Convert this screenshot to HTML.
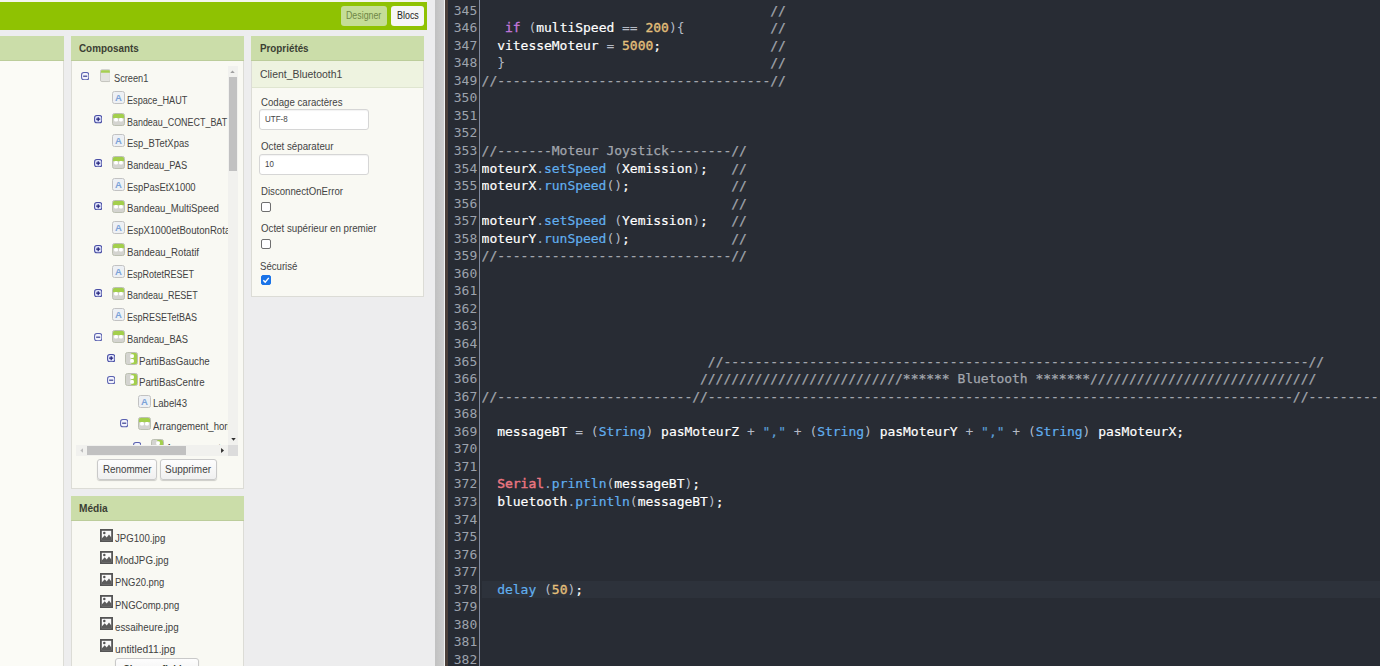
<!DOCTYPE html>
<html lang="fr">
<head>
<meta charset="utf-8">
<title>App Inventor / Arduino</title>
<style>
*{box-sizing:border-box;margin:0;padding:0}
html,body{width:1380px;height:666px;overflow:hidden;background:#ededee;font-family:"Liberation Sans",sans-serif;color:#333}
#left{position:absolute;left:0;top:0;width:445px;height:666px;background:#ededee;overflow:hidden}
#topstrip{position:absolute;left:0;top:0;width:436px;height:2px;background:#f4f5ee}
#bar{position:absolute;left:0;top:2px;width:427.3px;height:27.6px;background:#8fc202}
.tbtn{position:absolute;top:6px;height:20px;border-radius:3px;font-size:10px;line-height:20px;white-space:nowrap}
.tbtn b{position:absolute;top:-0.200px;font-weight:normal;transform-origin:0 50%}
#bdes{left:341px;width:46px;background:#c5dd96;color:#6f8746}
#bblo{left:391px;width:33px;background:#f6f6f6;color:#222}
#margin{position:absolute;left:427.3px;top:0;width:8px;height:34px;background:#ededee}
#vscroll{position:absolute;left:435px;top:0;width:9px;height:666px;background:linear-gradient(to right,#c1c1c1,#cecece)}
#vwhite{position:absolute;left:444px;top:0;width:1px;height:666px;background:#f2f2f2}
.panel{position:absolute;background:#f9f9f3;border:1px solid #dcdcd6}
.ph{position:absolute;left:-1px;right:-1px;top:-1px;height:25px;background:#cbdda9;border-bottom:1px solid #bccd9b}
#viewer{left:-1px;top:36px;width:64.500px;height:640px;background:#fbfbf6}
#comp{left:70.500px;top:36px;width:173px;height:453px}
#prop{left:251px;top:36px;width:173px;height:260.500px}
#media{left:70.500px;top:495.500px;width:173px;height:190px}
#psub{position:absolute;left:0;right:0;top:24px;height:27px;background:#eef3e0;border-bottom:1px solid #dfe5d0}
/* overlay : everything below is in page coordinates */
#ov{position:absolute;left:0;top:0;width:445px;height:666px;overflow:hidden}
.t{position:absolute;white-space:nowrap;transform-origin:0 50%;line-height:14px;height:14px}
.hd{font-weight:bold;font-size:10px;color:#3b4033}
.lb{font-size:10px;color:#424242}
.pl{font-size:10.3px;color:#444}
.ic,.tg{position:absolute;display:block}
#treeclip{position:absolute;left:71.500px;top:61.500px;width:156px;height:383.500px;overflow:hidden}
#treeclip>div{position:absolute;left:-71.500px;top:-61.500px;width:445px;height:666px}
/* scrollbars */
#cvs{position:absolute;left:227.500px;top:66px;width:10.500px;height:379px;background:#f1f1ee}
#cvs .th{position:absolute;left:1.500px;top:10.500px;width:7.500px;height:94px;background:#c1c1c1}
#chs{position:absolute;left:75.500px;top:445px;width:152px;height:10.500px;background:#f1f1ee}
#chs .th{position:absolute;left:11.500px;top:1px;width:99px;height:8.500px;background:#c1c1c1}
#corner{position:absolute;left:227.500px;top:445px;width:10.500px;height:10.500px;background:#dcdcdc}
.arr{position:absolute;display:block}
.btn{position:absolute;height:21px;border:1px solid #c9c9c9;border-radius:3px;background:linear-gradient(#fdfdfd,#f0f0f0);box-shadow:0 1px 1px rgba(0,0,0,.18)}
.inp{position:absolute;left:258.500px;width:110.500px;height:20.500px;border:1px solid #d6d6d6;border-radius:3px;background:#fff;box-shadow:inset 0 1px 1px rgba(0,0,0,.05)}
.cb{position:absolute;left:261px;width:10px;height:10px;border:1px solid #6f6f6f;border-radius:2px;background:#fff}
.cb.on{background:#1a73e8;border-color:#1a73e8}
/* editor */
#ed{position:absolute;left:445px;top:0;width:935px;height:666px;background:#282c34;overflow:hidden}
#edb{position:absolute;left:0;top:0;width:3px;height:666px;background:#4b3f39}
#gut{position:absolute;left:3px;top:0;width:31px;height:666px;background:#272b33}
#gsep{position:absolute;left:33.600px;top:0;width:1.700px;height:666px;background:#808a9f}
.ln{position:absolute;left:0;width:935px;height:17.55px;line-height:17.55px;font-family:"DejaVu Sans Mono","Liberation Mono",monospace;font-size:13px;letter-spacing:-0.026px;white-space:pre;color:#abb2bf}
.ln.hl .tx{background:#2d323b}
.num{position:absolute;left:8.800px;top:0;color:#9da3ad}
.tx{position:absolute;left:36.600px;top:0;width:900px;height:17.55px;overflow:hidden}
.w{color:#fff;-webkit-text-stroke:0.18px #fff}.c{color:#a2a6ad;-webkit-text-stroke:0.25px #a2a6ad}.k{color:#c678dd;-webkit-text-stroke:0.3px #c678dd}.n{color:#e5c07b;-webkit-text-stroke:0.3px #e5c07b}.f{color:#61afef;-webkit-text-stroke:0.2px #61afef}.p{color:#b4bac5}.d{color:#8fa8c8}.s{color:#5b9fd6;-webkit-text-stroke:0.2px #5b9fd6}.r{color:#ea7681;-webkit-text-stroke:0.45px #ea7681}
</style>
</head>
<body>
<div id="left">
  <div id="topstrip"></div>
  <div id="bar"></div>
  <div class="tbtn" id="bdes"><b style="left:5.200px;transform:scaleX(.882)">Designer</b></div>
  <div class="tbtn" id="bblo"><b style="left:5.500px;transform:scaleX(.892)">Blocs</b></div>
  <div id="margin"></div><div id="vscroll"></div><div id="vwhite"></div>

  <div class="panel" id="viewer"><div class="ph"></div></div>
  <div class="panel" id="comp"><div class="ph"></div></div>
  <div class="panel" id="prop"><div class="ph"></div><div id="psub"></div></div>
  <div class="panel" id="media"><div class="ph"></div></div>

  <div id="ov">
<span class="t hd" style="left:79.10px;top:41.90px;font-size:10px;transform:scaleX(0.986)">Composants</span>
<span class="t hd" style="left:259.60px;top:41.90px;font-size:10px;transform:scaleX(0.982)">Propriétés</span>
<span class="t hd" style="left:79.30px;top:501.80px;font-size:10px;transform:scaleX(1.013)">Média</span>
<span class="t pl" style="left:259.70px;top:67.40px;font-size:11.3px;transform:scaleX(0.923)">Client_Bluetooth1</span>
    <div id="treeclip"><div>
<svg class="tg" style="left:80.80px;top:71.80px" width="8.4" height="8.4" viewBox="0 0 9 9"><rect x="0.6" y="0.6" width="7.800" height="7.800" rx="2.500" fill="#f3f4fc" stroke="#5b62b0" stroke-width="1.100"/><path d="M2.300 4.500h4.400" stroke="#3d4291" stroke-width="1.300"/></svg><svg class="ic" style="left:99.70px;top:69.40px" width="10.800" height="13.400" viewBox="0 0 12 14"><rect x="0.500" y="0.500" width="11" height="13" rx="1.600" fill="#e4e4e0" stroke="#bfbfba"/><path d="M1 3.600V2.200a1.200 1.200 0 0 1 1.200-1.200h7.600a1.200 1.200 0 0 1 1.200 1.200v1.400z" fill="#a6cf52"/></svg><span class="t lb" style="left:113.50px;top:72.20px;font-size:10px;transform:scaleX(0.921)">Screen1</span>
<svg class="ic" style="left:112.00px;top:90.80px" width="13" height="13" viewBox="0 0 13 13"><rect x="0.500" y="0.500" width="12" height="12" rx="2" fill="#edf0f4" stroke="#c2c2c2"/><text x="6.500" y="9.800" text-anchor="middle" font-family="Liberation Sans, sans-serif" font-size="9.500" font-weight="bold" fill="#7aa2d8">A</text></svg><span class="t lb" style="left:127.40px;top:93.60px;font-size:10px;transform:scaleX(0.913)">Espace_HAUT</span>
<svg class="tg" style="left:94.00px;top:115.40px" width="8.4" height="8.4" viewBox="0 0 9 9"><rect x="0.6" y="0.6" width="7.800" height="7.800" rx="2.500" fill="#dfe3fa" stroke="#4a4fa5" stroke-width="1.100"/><path d="M2.300 4.500h4.400M4.500 2.300v4.400" stroke="#23237a" stroke-width="1.300"/></svg><svg class="ic" style="left:112.00px;top:113.00px" width="13" height="13" viewBox="0 0 13 13"><rect x="0.500" y="0.500" width="12" height="12" rx="2" fill="#d4d4d0" stroke="#bcc0b2"/><path d="M1 5.200V2.500A1.500 1.500 0 0 1 2.500 1h8A1.500 1.500 0 0 1 12 2.500V5.200z" fill="#a3cf4c"/><rect x="2.200" y="4.900" width="3.700" height="3.700" rx="1.300" fill="#fff"/><rect x="7.100" y="4.900" width="3.700" height="3.700" rx="1.300" fill="#fff"/></svg><span class="t lb" style="left:126.70px;top:115.80px;font-size:10px;transform:scaleX(0.893)">Bandeau_CONECT_BAT</span>
<svg class="ic" style="left:112.00px;top:134.40px" width="13" height="13" viewBox="0 0 13 13"><rect x="0.500" y="0.500" width="12" height="12" rx="2" fill="#edf0f4" stroke="#c2c2c2"/><text x="6.500" y="9.800" text-anchor="middle" font-family="Liberation Sans, sans-serif" font-size="9.500" font-weight="bold" fill="#7aa2d8">A</text></svg><span class="t lb" style="left:127.40px;top:137.20px;font-size:10px;transform:scaleX(0.943)">Esp_BTetXpas</span>
<svg class="tg" style="left:94.00px;top:158.50px" width="8.4" height="8.4" viewBox="0 0 9 9"><rect x="0.6" y="0.6" width="7.800" height="7.800" rx="2.500" fill="#dfe3fa" stroke="#4a4fa5" stroke-width="1.100"/><path d="M2.300 4.500h4.400M4.500 2.300v4.400" stroke="#23237a" stroke-width="1.300"/></svg><svg class="ic" style="left:112.00px;top:156.10px" width="13" height="13" viewBox="0 0 13 13"><rect x="0.500" y="0.500" width="12" height="12" rx="2" fill="#d4d4d0" stroke="#bcc0b2"/><path d="M1 5.200V2.500A1.500 1.500 0 0 1 2.500 1h8A1.500 1.500 0 0 1 12 2.500V5.200z" fill="#a3cf4c"/><rect x="2.200" y="4.900" width="3.700" height="3.700" rx="1.300" fill="#fff"/><rect x="7.100" y="4.900" width="3.700" height="3.700" rx="1.300" fill="#fff"/></svg><span class="t lb" style="left:126.70px;top:158.90px;font-size:10px;transform:scaleX(0.929)">Bandeau_PAS</span>
<svg class="ic" style="left:112.00px;top:177.80px" width="13" height="13" viewBox="0 0 13 13"><rect x="0.500" y="0.500" width="12" height="12" rx="2" fill="#edf0f4" stroke="#c2c2c2"/><text x="6.500" y="9.800" text-anchor="middle" font-family="Liberation Sans, sans-serif" font-size="9.500" font-weight="bold" fill="#7aa2d8">A</text></svg><span class="t lb" style="left:127.40px;top:180.60px;font-size:10px;transform:scaleX(0.942)">EspPasEtX1000</span>
<svg class="tg" style="left:94.00px;top:201.90px" width="8.4" height="8.4" viewBox="0 0 9 9"><rect x="0.6" y="0.6" width="7.800" height="7.800" rx="2.500" fill="#dfe3fa" stroke="#4a4fa5" stroke-width="1.100"/><path d="M2.300 4.500h4.400M4.500 2.300v4.400" stroke="#23237a" stroke-width="1.300"/></svg><svg class="ic" style="left:112.00px;top:199.50px" width="13" height="13" viewBox="0 0 13 13"><rect x="0.500" y="0.500" width="12" height="12" rx="2" fill="#d4d4d0" stroke="#bcc0b2"/><path d="M1 5.200V2.500A1.500 1.500 0 0 1 2.500 1h8A1.500 1.500 0 0 1 12 2.500V5.200z" fill="#a3cf4c"/><rect x="2.200" y="4.900" width="3.700" height="3.700" rx="1.300" fill="#fff"/><rect x="7.100" y="4.900" width="3.700" height="3.700" rx="1.300" fill="#fff"/></svg><span class="t lb" style="left:126.70px;top:202.30px;font-size:10px;transform:scaleX(0.960)">Bandeau_MultiSpeed</span>
<svg class="ic" style="left:112.00px;top:221.10px" width="13" height="13" viewBox="0 0 13 13"><rect x="0.500" y="0.500" width="12" height="12" rx="2" fill="#edf0f4" stroke="#c2c2c2"/><text x="6.500" y="9.800" text-anchor="middle" font-family="Liberation Sans, sans-serif" font-size="9.500" font-weight="bold" fill="#7aa2d8">A</text></svg><span class="t lb" style="left:127.40px;top:223.90px;font-size:10px;transform:scaleX(0.962)">EspX1000etBoutonRotatif</span>
<svg class="tg" style="left:94.00px;top:245.40px" width="8.4" height="8.4" viewBox="0 0 9 9"><rect x="0.6" y="0.6" width="7.800" height="7.800" rx="2.500" fill="#dfe3fa" stroke="#4a4fa5" stroke-width="1.100"/><path d="M2.300 4.500h4.400M4.500 2.300v4.400" stroke="#23237a" stroke-width="1.300"/></svg><svg class="ic" style="left:112.00px;top:243.00px" width="13" height="13" viewBox="0 0 13 13"><rect x="0.500" y="0.500" width="12" height="12" rx="2" fill="#d4d4d0" stroke="#bcc0b2"/><path d="M1 5.200V2.500A1.500 1.500 0 0 1 2.500 1h8A1.500 1.500 0 0 1 12 2.500V5.200z" fill="#a3cf4c"/><rect x="2.200" y="4.900" width="3.700" height="3.700" rx="1.300" fill="#fff"/><rect x="7.100" y="4.900" width="3.700" height="3.700" rx="1.300" fill="#fff"/></svg><span class="t lb" style="left:126.70px;top:245.80px;font-size:10px;transform:scaleX(0.966)">Bandeau_Rotatif</span>
<svg class="ic" style="left:112.00px;top:264.70px" width="13" height="13" viewBox="0 0 13 13"><rect x="0.500" y="0.500" width="12" height="12" rx="2" fill="#edf0f4" stroke="#c2c2c2"/><text x="6.500" y="9.800" text-anchor="middle" font-family="Liberation Sans, sans-serif" font-size="9.500" font-weight="bold" fill="#7aa2d8">A</text></svg><span class="t lb" style="left:127.40px;top:267.50px;font-size:10px;transform:scaleX(0.901)">EspRotetRESET</span>
<svg class="tg" style="left:94.00px;top:288.90px" width="8.4" height="8.4" viewBox="0 0 9 9"><rect x="0.6" y="0.6" width="7.800" height="7.800" rx="2.500" fill="#dfe3fa" stroke="#4a4fa5" stroke-width="1.100"/><path d="M2.300 4.500h4.400M4.500 2.300v4.400" stroke="#23237a" stroke-width="1.300"/></svg><svg class="ic" style="left:112.00px;top:286.50px" width="13" height="13" viewBox="0 0 13 13"><rect x="0.500" y="0.500" width="12" height="12" rx="2" fill="#d4d4d0" stroke="#bcc0b2"/><path d="M1 5.200V2.500A1.500 1.500 0 0 1 2.500 1h8A1.500 1.500 0 0 1 12 2.500V5.200z" fill="#a3cf4c"/><rect x="2.200" y="4.900" width="3.700" height="3.700" rx="1.300" fill="#fff"/><rect x="7.100" y="4.900" width="3.700" height="3.700" rx="1.300" fill="#fff"/></svg><span class="t lb" style="left:126.70px;top:289.30px;font-size:10px;transform:scaleX(0.897)">Bandeau_RESET</span>
<svg class="ic" style="left:112.00px;top:308.30px" width="13" height="13" viewBox="0 0 13 13"><rect x="0.500" y="0.500" width="12" height="12" rx="2" fill="#edf0f4" stroke="#c2c2c2"/><text x="6.500" y="9.800" text-anchor="middle" font-family="Liberation Sans, sans-serif" font-size="9.500" font-weight="bold" fill="#7aa2d8">A</text></svg><span class="t lb" style="left:127.40px;top:311.10px;font-size:10px;transform:scaleX(0.901)">EspRESETetBAS</span>
<svg class="tg" style="left:94.00px;top:332.70px" width="8.4" height="8.4" viewBox="0 0 9 9"><rect x="0.6" y="0.6" width="7.800" height="7.800" rx="2.500" fill="#f3f4fc" stroke="#5b62b0" stroke-width="1.100"/><path d="M2.300 4.500h4.400" stroke="#3d4291" stroke-width="1.300"/></svg><svg class="ic" style="left:112.00px;top:330.30px" width="13" height="13" viewBox="0 0 13 13"><rect x="0.500" y="0.500" width="12" height="12" rx="2" fill="#d4d4d0" stroke="#bcc0b2"/><path d="M1 5.200V2.500A1.500 1.500 0 0 1 2.500 1h8A1.500 1.500 0 0 1 12 2.500V5.200z" fill="#a3cf4c"/><rect x="2.200" y="4.900" width="3.700" height="3.700" rx="1.300" fill="#fff"/><rect x="7.100" y="4.900" width="3.700" height="3.700" rx="1.300" fill="#fff"/></svg><span class="t lb" style="left:126.70px;top:333.10px;font-size:10px;transform:scaleX(0.930)">Bandeau_BAS</span>
<svg class="tg" style="left:107.00px;top:354.10px" width="8.4" height="8.4" viewBox="0 0 9 9"><rect x="0.6" y="0.6" width="7.800" height="7.800" rx="2.500" fill="#dfe3fa" stroke="#4a4fa5" stroke-width="1.100"/><path d="M2.300 4.500h4.400M4.500 2.300v4.400" stroke="#23237a" stroke-width="1.300"/></svg><svg class="ic" style="left:124.80px;top:351.70px" width="13" height="13" viewBox="0 0 13 13"><rect x="0.500" y="0.500" width="12" height="12" rx="2" fill="#d4d4d0" stroke="#bcc0b2"/><path d="M6.300 1h4.200A1.500 1.500 0 0 1 12 2.500v8A1.500 1.500 0 0 1 10.500 12H6.300z" fill="#a3cf4c"/><rect x="5.200" y="2.300" width="3.700" height="3.700" rx="1.300" fill="#fff"/><rect x="5.200" y="7.100" width="3.700" height="3.700" rx="1.300" fill="#fff"/></svg><span class="t lb" style="left:139.40px;top:354.50px;font-size:10px;transform:scaleX(0.971)">PartiBasGauche</span>
<svg class="tg" style="left:107.00px;top:375.60px" width="8.4" height="8.4" viewBox="0 0 9 9"><rect x="0.6" y="0.6" width="7.800" height="7.800" rx="2.500" fill="#f3f4fc" stroke="#5b62b0" stroke-width="1.100"/><path d="M2.300 4.500h4.400" stroke="#3d4291" stroke-width="1.300"/></svg><svg class="ic" style="left:124.80px;top:373.20px" width="13" height="13" viewBox="0 0 13 13"><rect x="0.500" y="0.500" width="12" height="12" rx="2" fill="#d4d4d0" stroke="#bcc0b2"/><path d="M6.300 1h4.200A1.500 1.500 0 0 1 12 2.500v8A1.500 1.500 0 0 1 10.500 12H6.300z" fill="#a3cf4c"/><rect x="5.200" y="2.300" width="3.700" height="3.700" rx="1.300" fill="#fff"/><rect x="5.200" y="7.100" width="3.700" height="3.700" rx="1.300" fill="#fff"/></svg><span class="t lb" style="left:139.40px;top:376.00px;font-size:10px;transform:scaleX(0.969)">PartiBasCentre</span>
<svg class="ic" style="left:137.80px;top:394.60px" width="13" height="13" viewBox="0 0 13 13"><rect x="0.500" y="0.500" width="12" height="12" rx="2" fill="#edf0f4" stroke="#c2c2c2"/><text x="6.500" y="9.800" text-anchor="middle" font-family="Liberation Sans, sans-serif" font-size="9.500" font-weight="bold" fill="#7aa2d8">A</text></svg><span class="t lb" style="left:153.20px;top:397.40px;font-size:10px;transform:scaleX(0.955)">Label43</span>
<svg class="tg" style="left:120.00px;top:419.20px" width="8.4" height="8.4" viewBox="0 0 9 9"><rect x="0.6" y="0.6" width="7.800" height="7.800" rx="2.500" fill="#f3f4fc" stroke="#5b62b0" stroke-width="1.100"/><path d="M2.300 4.500h4.400" stroke="#3d4291" stroke-width="1.300"/></svg><svg class="ic" style="left:137.80px;top:416.80px" width="13" height="13" viewBox="0 0 13 13"><rect x="0.500" y="0.500" width="12" height="12" rx="2" fill="#d4d4d0" stroke="#bcc0b2"/><path d="M1 5.200V2.500A1.500 1.500 0 0 1 2.500 1h8A1.500 1.500 0 0 1 12 2.500V5.200z" fill="#a3cf4c"/><rect x="2.200" y="4.900" width="3.700" height="3.700" rx="1.300" fill="#fff"/><rect x="7.100" y="4.900" width="3.700" height="3.700" rx="1.300" fill="#fff"/></svg><span class="t lb" style="left:152.50px;top:419.60px;font-size:10px;transform:scaleX(0.957)">Arrangement_horizontal</span>
<svg class="tg" style="left:133.00px;top:441.50px" width="8.4" height="8.4" viewBox="0 0 9 9"><rect x="0.6" y="0.6" width="7.800" height="7.800" rx="2.500" fill="#f3f4fc" stroke="#5b62b0" stroke-width="1.100"/><path d="M2.300 4.500h4.400" stroke="#3d4291" stroke-width="1.300"/></svg><svg class="ic" style="left:150.80px;top:439.10px" width="13" height="13" viewBox="0 0 13 13"><rect x="0.500" y="0.500" width="12" height="12" rx="2" fill="#d4d4d0" stroke="#bcc0b2"/><path d="M6.300 1h4.200A1.500 1.500 0 0 1 12 2.500v8A1.500 1.500 0 0 1 10.500 12H6.300z" fill="#a3cf4c"/><rect x="5.200" y="2.300" width="3.700" height="3.700" rx="1.300" fill="#fff"/><rect x="5.200" y="7.100" width="3.700" height="3.700" rx="1.300" fill="#fff"/></svg><span class="t lb" style="left:165.50px;top:441.90px;font-size:10px;transform:scaleX(0.950)">Arrangement_vertical</span>
    </div></div>
    <div id="cvs"><div class="th"></div>
      <svg class="arr" style="left:2.500px;top:3.500px" width="5" height="3" viewBox="0 0 6 4"><path d="M0 4L3 0.500 6 4z" fill="#a0a0a0"/></svg>
      <svg class="arr" style="left:3px;top:371.500px" width="5" height="3" viewBox="0 0 6 4"><path d="M0 0L3 3.500 6 0z" fill="#303030"/></svg>
    </div>
    <div id="chs"><div class="th"></div>
      <svg class="arr" style="left:4.500px;top:3px" width="3" height="5" viewBox="0 0 4 6"><path d="M4 0L0.500 3 4 6z" fill="#bdbdbd"/></svg>
      <svg class="arr" style="left:145px;top:3px" width="3.500" height="5" viewBox="0 0 4 6"><path d="M0 0L3.500 3 0 6z" fill="#303030"/></svg>
    </div>
    <div id="corner"></div>
    <div class="btn" style="left:97px;top:459px;width:59.500px"></div>
    <div class="btn" style="left:160px;top:459px;width:56.500px"></div>
    <div class="inp" style="top:109px"></div>
    <div class="inp" style="top:154px"></div>
    <div class="cb" style="top:202px"></div>
    <div class="cb" style="top:238.500px"></div>
    <div class="cb on" style="top:275px"><svg style="position:absolute;left:0;top:0" width="8" height="8" viewBox="0 0 8 8"><path d="M1.300 4.200l1.900 1.900 3.600-4.200" fill="none" stroke="#fff" stroke-width="1.400"/></svg></div>
<span class="t pl" style="left:260.50px;top:95.70px;font-size:10.3px;transform:scaleX(0.937)">Codage caractères</span>
<span class="t pl" style="left:264.70px;top:111.80px;font-size:9.2px;transform:scaleX(0.868)">UTF-8</span>
<span class="t pl" style="left:260.50px;top:140.00px;font-size:10.3px;transform:scaleX(0.945)">Octet séparateur</span>
<span class="t pl" style="left:264.90px;top:156.90px;font-size:9.2px;transform:scaleX(0.860)">10</span>
<span class="t pl" style="left:260.50px;top:185.20px;font-size:10.3px;transform:scaleX(0.936)">DisconnectOnError</span>
<span class="t pl" style="left:260.50px;top:222.10px;font-size:10.3px;transform:scaleX(0.943)">Octet supérieur en premier</span>
<span class="t pl" style="left:260.30px;top:259.70px;font-size:10.3px;transform:scaleX(0.934)">Sécurisé</span>
<svg class="ic" style="left:99.50px;top:529.00px" width="13" height="13" viewBox="0 0 13 13"><rect x="0.900" y="0.900" width="11.200" height="11.200" fill="#fafafa" stroke="#555" stroke-width="1.800"/><path d="M1.500 11.500V9.800l3.200-3.600 2 2.200 2.300-3 2.500 3.400v2.700z" fill="#5c5c5c"/><circle cx="4.300" cy="3.900" r="1.250" fill="#555"/></svg><span class="t lb" style="left:115.10px;top:532.30px;font-size:10px;transform:scaleX(0.962)">JPG100.jpg</span>
<svg class="ic" style="left:99.50px;top:551.07px" width="13" height="13" viewBox="0 0 13 13"><rect x="0.900" y="0.900" width="11.200" height="11.200" fill="#fafafa" stroke="#555" stroke-width="1.800"/><path d="M1.500 11.500V9.800l3.200-3.600 2 2.200 2.300-3 2.500 3.400v2.700z" fill="#5c5c5c"/><circle cx="4.300" cy="3.900" r="1.250" fill="#555"/></svg><span class="t lb" style="left:115.10px;top:554.37px;font-size:10px;transform:scaleX(0.976)">ModJPG.jpg</span>
<svg class="ic" style="left:99.50px;top:573.14px" width="13" height="13" viewBox="0 0 13 13"><rect x="0.900" y="0.900" width="11.200" height="11.200" fill="#fafafa" stroke="#555" stroke-width="1.800"/><path d="M1.500 11.500V9.800l3.200-3.600 2 2.200 2.300-3 2.500 3.400v2.700z" fill="#5c5c5c"/><circle cx="4.300" cy="3.900" r="1.250" fill="#555"/></svg><span class="t lb" style="left:115.10px;top:576.44px;font-size:10px;transform:scaleX(0.943)">PNG20.png</span>
<svg class="ic" style="left:99.50px;top:595.21px" width="13" height="13" viewBox="0 0 13 13"><rect x="0.900" y="0.900" width="11.200" height="11.200" fill="#fafafa" stroke="#555" stroke-width="1.800"/><path d="M1.500 11.500V9.800l3.200-3.600 2 2.200 2.300-3 2.500 3.400v2.700z" fill="#5c5c5c"/><circle cx="4.300" cy="3.900" r="1.250" fill="#555"/></svg><span class="t lb" style="left:115.10px;top:598.51px;font-size:10px;transform:scaleX(0.948)">PNGComp.png</span>
<svg class="ic" style="left:99.50px;top:617.28px" width="13" height="13" viewBox="0 0 13 13"><rect x="0.900" y="0.900" width="11.200" height="11.200" fill="#fafafa" stroke="#555" stroke-width="1.800"/><path d="M1.500 11.500V9.800l3.200-3.600 2 2.200 2.300-3 2.500 3.400v2.700z" fill="#5c5c5c"/><circle cx="4.300" cy="3.900" r="1.250" fill="#555"/></svg><span class="t lb" style="left:115.10px;top:620.58px;font-size:10px;transform:scaleX(0.979)">essaiheure.jpg</span>
<svg class="ic" style="left:99.50px;top:639.35px" width="13" height="13" viewBox="0 0 13 13"><rect x="0.900" y="0.900" width="11.200" height="11.200" fill="#fafafa" stroke="#555" stroke-width="1.800"/><path d="M1.500 11.500V9.800l3.200-3.600 2 2.200 2.300-3 2.500 3.400v2.700z" fill="#5c5c5c"/><circle cx="4.300" cy="3.900" r="1.250" fill="#555"/></svg><span class="t lb" style="left:115.10px;top:642.65px;font-size:10px;transform:scaleX(1.026)">untitled11.jpg</span>
    <div class="btn" style="left:114.500px;top:658px;width:84.500px"></div>
<span class="t lb" style="left:102.50px;top:461.90px;font-size:10.5px;transform:scaleX(0.934)">Renommer</span>
<span class="t lb" style="left:164.80px;top:461.90px;font-size:10.5px;transform:scaleX(0.950)">Supprimer</span>
<span class="t hd" style="left:122.50px;top:662.60px;font-size:10px;transform:scaleX(0.950)">Charger fichier ...</span>
  </div>
</div>

<div id="ed">
  <div id="edb"></div><div id="gut"></div><div id="gsep"></div>
<div class="ln" style="top:-16.00px"><span class="num">344</span><span class="tx"><span class="w">  }</span></span></div>
<div class="ln" style="top:1.55px"><span class="num">345</span><span class="tx">                                     <span class="c">//</span></span></div>
<div class="ln" style="top:19.10px"><span class="num">346</span><span class="tx">   <span class="k">if</span> <span class="p">(</span><span class="w">multiSpeed</span> <span class="p">==</span> <span class="n">200</span><span class="p">){</span>           <span class="c">//</span></span></div>
<div class="ln" style="top:36.65px"><span class="num">347</span><span class="tx">  <span class="w">vitesseMoteur</span> <span class="p">=</span> <span class="n">5000</span><span class="w">;</span>              <span class="c">//</span></span></div>
<div class="ln" style="top:54.20px"><span class="num">348</span><span class="tx">  <span class="p">}</span>                                  <span class="c">//</span></span></div>
<div class="ln" style="top:71.75px"><span class="num">349</span><span class="tx"><span class="c">//-----------------------------------//</span></span></div>
<div class="ln" style="top:89.30px"><span class="num">350</span><span class="tx"></span></div>
<div class="ln" style="top:106.85px"><span class="num">351</span><span class="tx"></span></div>
<div class="ln" style="top:124.40px"><span class="num">352</span><span class="tx"></span></div>
<div class="ln" style="top:141.95px"><span class="num">353</span><span class="tx"><span class="c">//-------Moteur Joystick--------//</span></span></div>
<div class="ln" style="top:159.50px"><span class="num">354</span><span class="tx"><span class="w">moteurX</span><span class="d">.</span><span class="f">setSpeed</span> <span class="p">(</span><span class="w">Xemission</span><span class="p">)</span><span class="w">;</span>   <span class="c">//</span></span></div>
<div class="ln" style="top:177.05px"><span class="num">355</span><span class="tx"><span class="w">moteurX</span><span class="d">.</span><span class="f">runSpeed</span><span class="p">()</span><span class="w">;</span>             <span class="c">//</span></span></div>
<div class="ln" style="top:194.60px"><span class="num">356</span><span class="tx">                                <span class="c">//</span></span></div>
<div class="ln" style="top:212.15px"><span class="num">357</span><span class="tx"><span class="w">moteurY</span><span class="d">.</span><span class="f">setSpeed</span> <span class="p">(</span><span class="w">Yemission</span><span class="p">)</span><span class="w">;</span>   <span class="c">//</span></span></div>
<div class="ln" style="top:229.70px"><span class="num">358</span><span class="tx"><span class="w">moteurY</span><span class="d">.</span><span class="f">runSpeed</span><span class="p">()</span><span class="w">;</span>             <span class="c">//</span></span></div>
<div class="ln" style="top:247.25px"><span class="num">359</span><span class="tx"><span class="c">//------------------------------//</span></span></div>
<div class="ln" style="top:264.80px"><span class="num">360</span><span class="tx"></span></div>
<div class="ln" style="top:282.35px"><span class="num">361</span><span class="tx"></span></div>
<div class="ln" style="top:299.90px"><span class="num">362</span><span class="tx"></span></div>
<div class="ln" style="top:317.45px"><span class="num">363</span><span class="tx"></span></div>
<div class="ln" style="top:335.00px"><span class="num">364</span><span class="tx"></span></div>
<div class="ln" style="top:352.55px"><span class="num">365</span><span class="tx">                             <span class="c">//---------------------------------------------------------------------------//</span></span></div>
<div class="ln" style="top:370.10px"><span class="num">366</span><span class="tx">                            <span class="c">//////////////////////////****** Bluetooth *******/////////////////////////////</span></span></div>
<div class="ln" style="top:387.65px"><span class="num">367</span><span class="tx"><span class="c">//-------------------------//---------------------------------------------------------------------------//--------------</span></span></div>
<div class="ln" style="top:405.20px"><span class="num">368</span><span class="tx"></span></div>
<div class="ln" style="top:422.75px"><span class="num">369</span><span class="tx">  <span class="w">messageBT</span> <span class="p">=</span> <span class="p">(</span><span class="f">String</span><span class="p">)</span> <span class="w">pasMoteurZ</span> <span class="p">+</span> <span class="s">","</span> <span class="p">+</span> <span class="p">(</span><span class="f">String</span><span class="p">)</span> <span class="w">pasMoteurY</span> <span class="p">+</span> <span class="s">","</span> <span class="p">+</span> <span class="p">(</span><span class="f">String</span><span class="p">)</span> <span class="w">pasMoteurX;</span></span></div>
<div class="ln" style="top:440.30px"><span class="num">370</span><span class="tx"></span></div>
<div class="ln" style="top:457.85px"><span class="num">371</span><span class="tx"></span></div>
<div class="ln" style="top:475.40px"><span class="num">372</span><span class="tx">  <span class="r">Serial</span><span class="d">.</span><span class="f">println</span><span class="p">(</span><span class="w">messageBT</span><span class="p">)</span><span class="w">;</span></span></div>
<div class="ln" style="top:492.95px"><span class="num">373</span><span class="tx">  <span class="w">bluetooth</span><span class="d">.</span><span class="f">println</span><span class="p">(</span><span class="w">messageBT</span><span class="p">)</span><span class="w">;</span></span></div>
<div class="ln" style="top:510.50px"><span class="num">374</span><span class="tx"></span></div>
<div class="ln" style="top:528.05px"><span class="num">375</span><span class="tx"></span></div>
<div class="ln" style="top:545.60px"><span class="num">376</span><span class="tx"></span></div>
<div class="ln" style="top:563.15px"><span class="num">377</span><span class="tx"></span></div>
<div class="ln hl" style="top:580.70px"><span class="num">378</span><span class="tx">  <span class="f">delay</span> <span class="p">(</span><span class="n">50</span><span class="p">)</span><span class="w">;</span></span></div>
<div class="ln" style="top:598.25px"><span class="num">379</span><span class="tx"></span></div>
<div class="ln" style="top:615.80px"><span class="num">380</span><span class="tx"></span></div>
<div class="ln" style="top:633.35px"><span class="num">381</span><span class="tx"></span></div>
<div class="ln" style="top:650.90px"><span class="num">382</span><span class="tx"></span></div>
<div class="ln" style="top:668.45px"><span class="num">383</span><span class="tx"></span></div>
</div>
</body>
</html>
